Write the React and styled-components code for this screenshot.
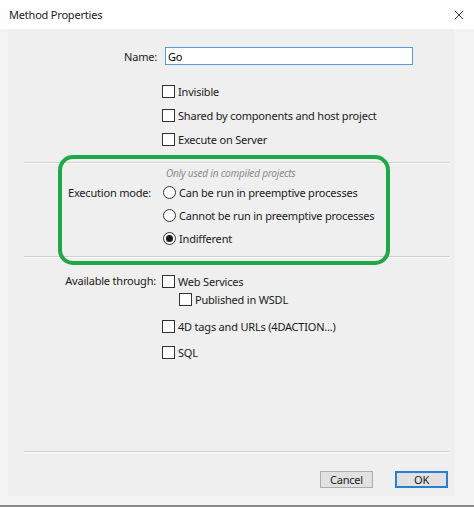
import React from 'react';
import styled, { createGlobalStyle } from 'styled-components';

const GlobalStyle = createGlobalStyle`
  html, body {
    margin: 0;
    padding: 0;
    background: #f3f3f3;
  }
  body {
    font-family: "Noto Sans", "Open Sans", sans-serif;
    font-size: 11px;
    letter-spacing: -0.2px;
    color: #1a1a1a;
  }
`;

export default function App() {
  return (
    <>
      <GlobalStyle />
      <Window>
        <TitleBar>
          <Title>Method Properties</Title>
          <CloseIcon viewBox="0 0 12 12">
            <path d="M1 1 L11 11 M11 1 L1 11" stroke="#222" strokeWidth="1.1" fill="none" />
          </CloseIcon>
        </TitleBar>
        <Body>
          <Panel>
            <NameRow>
              <FieldLabel>Name:</FieldLabel>
              <NameInput defaultValue="Go" />
            </NameRow>

            <CheckGroup>
              <CheckRow label="Invisible" />
              <CheckRow label="Shared by components and host project" />
              <CheckRow label="Execute on Server" />
            </CheckGroup>

            <Separator $top={11} />

            <Note>Only used in compiled projects</Note>
            <ModeGrid>
              <ModeLabel>Execution mode:</ModeLabel>
              <RadioList>
                <RadioRow label="Can be run in preemptive processes" />
                <RadioRow label="Cannot be run in preemptive processes" />
                <RadioRow label="Indifferent" checked />
              </RadioList>
            </ModeGrid>

            <Separator $top={6} />

            <AvailGrid>
              <AvailLabel>Available through:</AvailLabel>
              <AvailList>
                <CheckRow label="Web Services" $h={18} />
                <CheckRow label="Published in WSDL" $h={18} $indent={17} />
                <CheckRow label="4D tags and URLs (4DACTION...)" $h={18} $top={9} />
                <CheckRow label="SQL" $h={18} $top={8} />
              </AvailList>
            </AvailGrid>

            <Footer>
              <Separator $top={0} />
              <ButtonBar>
                <Button>Cancel</Button>
                <Button $primary>OK</Button>
              </ButtonBar>
            </Footer>

            <Highlight />
          </Panel>
        </Body>
        <BottomEdge />
      </Window>
    </>
  );
}

function CheckRow({ label, $h = 24, $indent = 0, $top = 0 }) {
  return (
    <Choice $h={$h} $indent={$indent} $top={$top}>
      <Box />
      <span>{label}</span>
    </Choice>
  );
}

function RadioRow({ label, checked }) {
  return (
    <Choice $h={23}>
      <Radio $checked={checked} />
      <span>{label}</span>
    </Choice>
  );
}

const Window = styled.div`
  width: 474px;
  height: 507px;
  display: flex;
  flex-direction: column;
  overflow: hidden;
`;

const TitleBar = styled.div`
  height: 29px;
  background: #ffffff;
  display: flex;
  align-items: center;
  justify-content: space-between;
  padding: 0 10px 0 9px;
`;

const Title = styled.div`
  font-size: 11px;
  color: #1a1a1a;
`;

const CloseIcon = styled.svg`
  width: 10px;
  height: 10px;
`;

const Body = styled.div`
  flex: 1;
  display: flex;
  padding: 0 20px 9px 8px;
  background: #f3f3f3;
`;

const Panel = styled.div`
  flex: 1;
  position: relative;
  display: flex;
  flex-direction: column;
  background: #efefef;
  padding-top: 18px;
`;

const NameRow = styled.div`
  display: grid;
  grid-template-columns: 149px 248px;
  column-gap: 8px;
  align-items: center;
  height: 18px;
`;

const FieldLabel = styled.div`
  justify-self: end;
`;

const NameInput = styled.input`
  box-sizing: border-box;
  height: 18px;
  width: 248px;
  border: 1px solid #5b9bd5;
  background: #ffffff;
  font: inherit;
  letter-spacing: inherit;
  padding: 0 2px;
  margin: 0;
  outline: none;
`;

const CheckGroup = styled.div`
  display: flex;
  flex-direction: column;
  margin-top: 14px;
  padding-left: 154px;
`;

const Choice = styled.div`
  display: flex;
  align-items: center;
  gap: 3px;
  height: ${p => p.$h}px;
  margin-left: ${p => p.$indent || 0}px;
  margin-top: ${p => p.$top || 0}px;
  white-space: nowrap;
`;

const Box = styled.span`
  box-sizing: border-box;
  width: 13px;
  height: 13px;
  border: 1px solid #333333;
  background: #ffffff;
  flex: none;
`;

const Radio = styled.span`
  box-sizing: border-box;
  width: 13px;
  height: 13px;
  border: 1px solid #333333;
  border-radius: 50%;
  background: #ffffff;
  flex: none;
  display: flex;
  align-items: center;
  justify-content: center;
  &::after {
    content: '';
    width: 7px;
    height: 7px;
    border-radius: 50%;
    background: ${p => (p.$checked ? '#1a1a1a' : 'transparent')};
  }
`;

const Separator = styled.div`
  height: 0;
  margin: ${p => p.$top}px 5px 0 16px;
  border-top: 1px solid #d0d0d0;
  border-bottom: 1px solid #fbfbfb;
`;

const Note = styled.div`
  height: 14px;
  margin-top: 2px;
  padding-left: 158px;
  font-size: 10px;
  font-style: italic;
  color: #8c8c8c;
  line-height: 14px;
`;

const ModeGrid = styled.div`
  display: grid;
  grid-template-columns: 143px auto;
  column-gap: 12px;
  margin-top: 1px;
`;

const ModeLabel = styled.div`
  justify-self: end;
  line-height: 23px;
`;

const RadioList = styled.div`
  display: flex;
  flex-direction: column;
`;

const AvailGrid = styled.div`
  display: grid;
  grid-template-columns: 148px auto;
  column-gap: 6px;
  margin-top: 14px;
`;

const AvailLabel = styled.div`
  justify-self: end;
  line-height: 18px;
`;

const AvailList = styled.div`
  display: flex;
  flex-direction: column;
`;

const Footer = styled.div`
  margin-top: auto;
  display: flex;
  flex-direction: column;
`;

const ButtonBar = styled.div`
  display: flex;
  justify-content: flex-end;
  gap: 22px;
  padding: 18px 6px 8px 0;
`;

const Button = styled.button`
  box-sizing: border-box;
  width: 53px;
  height: 17px;
  padding: 0;
  font: inherit;
  letter-spacing: inherit;
  color: #1a1a1a;
  background: #e1e1e1;
  border: ${p => (p.$primary ? '2px solid #2a7fd4' : '1px solid #adadad')};
  display: flex;
  align-items: center;
  justify-content: center;
`;

const Highlight = styled.div`
  position: absolute;
  left: 50px;
  top: 126px;
  width: 324px;
  height: 102px;
  border: 4px solid #1fa84a;
  border-radius: 15px;
  pointer-events: none;
`;

const BottomEdge = styled.div`
  height: 2px;
  background: #8a8a8a;
`;
